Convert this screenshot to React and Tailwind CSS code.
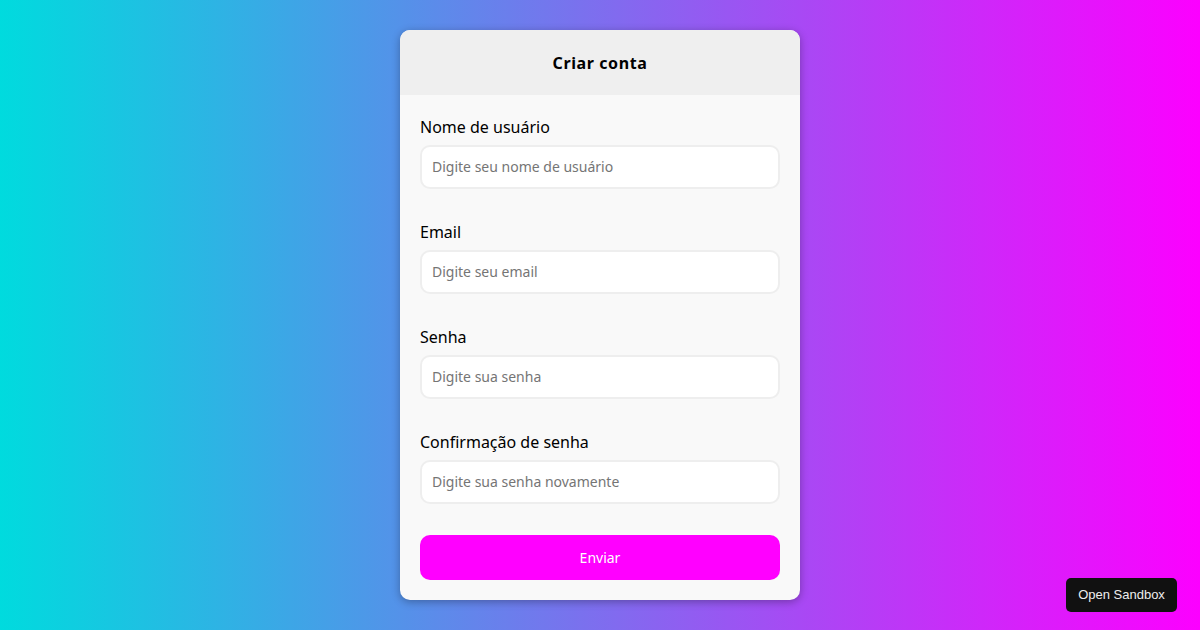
export default function App() {
  const fields = [
    ["Nome de usuário", "Digite seu nome de usuário", "text"],
    ["Email", "Digite seu email", "email"],
    ["Senha", "Digite sua senha", "password"],
    ["Confirmação de senha", "Digite sua senha novamente", "password"],
  ];
  return (
    <div
      className="relative w-full h-[630px] overflow-hidden bg-[linear-gradient(90deg,#00dbde,#fc00ff)] flex justify-center pt-[30px]"
      style={{ fontFamily: '"Noto Sans", sans-serif' }}
    >
      <div className="w-[400px] h-[570px] rounded-[10px] overflow-hidden bg-[#f9f9f9] shadow-[0_2px_8px_rgba(0,0,0,0.3)] flex flex-col">
        <div className="h-[65px] bg-[#efefef] flex items-center justify-center">
          <span className="text-[16px] font-bold text-black tracking-[0.6px]">Criar conta</span>
        </div>
        <div className="px-5 pt-5 pb-5 flex flex-col">
          {fields.map(([label, ph, type], i) => (
            <div key={i} className={i === 0 ? "" : "mt-[31px]"}>
              <div className="text-[16px] leading-[24px] text-black">{label}</div>
              <input
                type={type}
                placeholder={ph}
                className="mt-[6px] w-full h-[44px] bg-white border-2 border-[#eeeeee] rounded-[10px] px-[10px] pb-[2px] text-[14px] text-black placeholder:text-[#757575] outline-none"
              />
            </div>
          ))}
          <button className="mt-[31px] h-[45px] w-full rounded-[10px] bg-[#ff00ff] text-white text-[14px] font-normal">
            Enviar
          </button>
        </div>
      </div>
      <div
        className="absolute right-[23px] bottom-[18px] w-[111px] h-[34px] rounded-[5px] bg-[#111111] text-[#eeeeee] text-[13px] flex items-center justify-center"
        style={{ fontFamily: '"Liberation Sans", Arial, sans-serif' }}
      >
        Open Sandbox
      </div>
    </div>
  );
}
